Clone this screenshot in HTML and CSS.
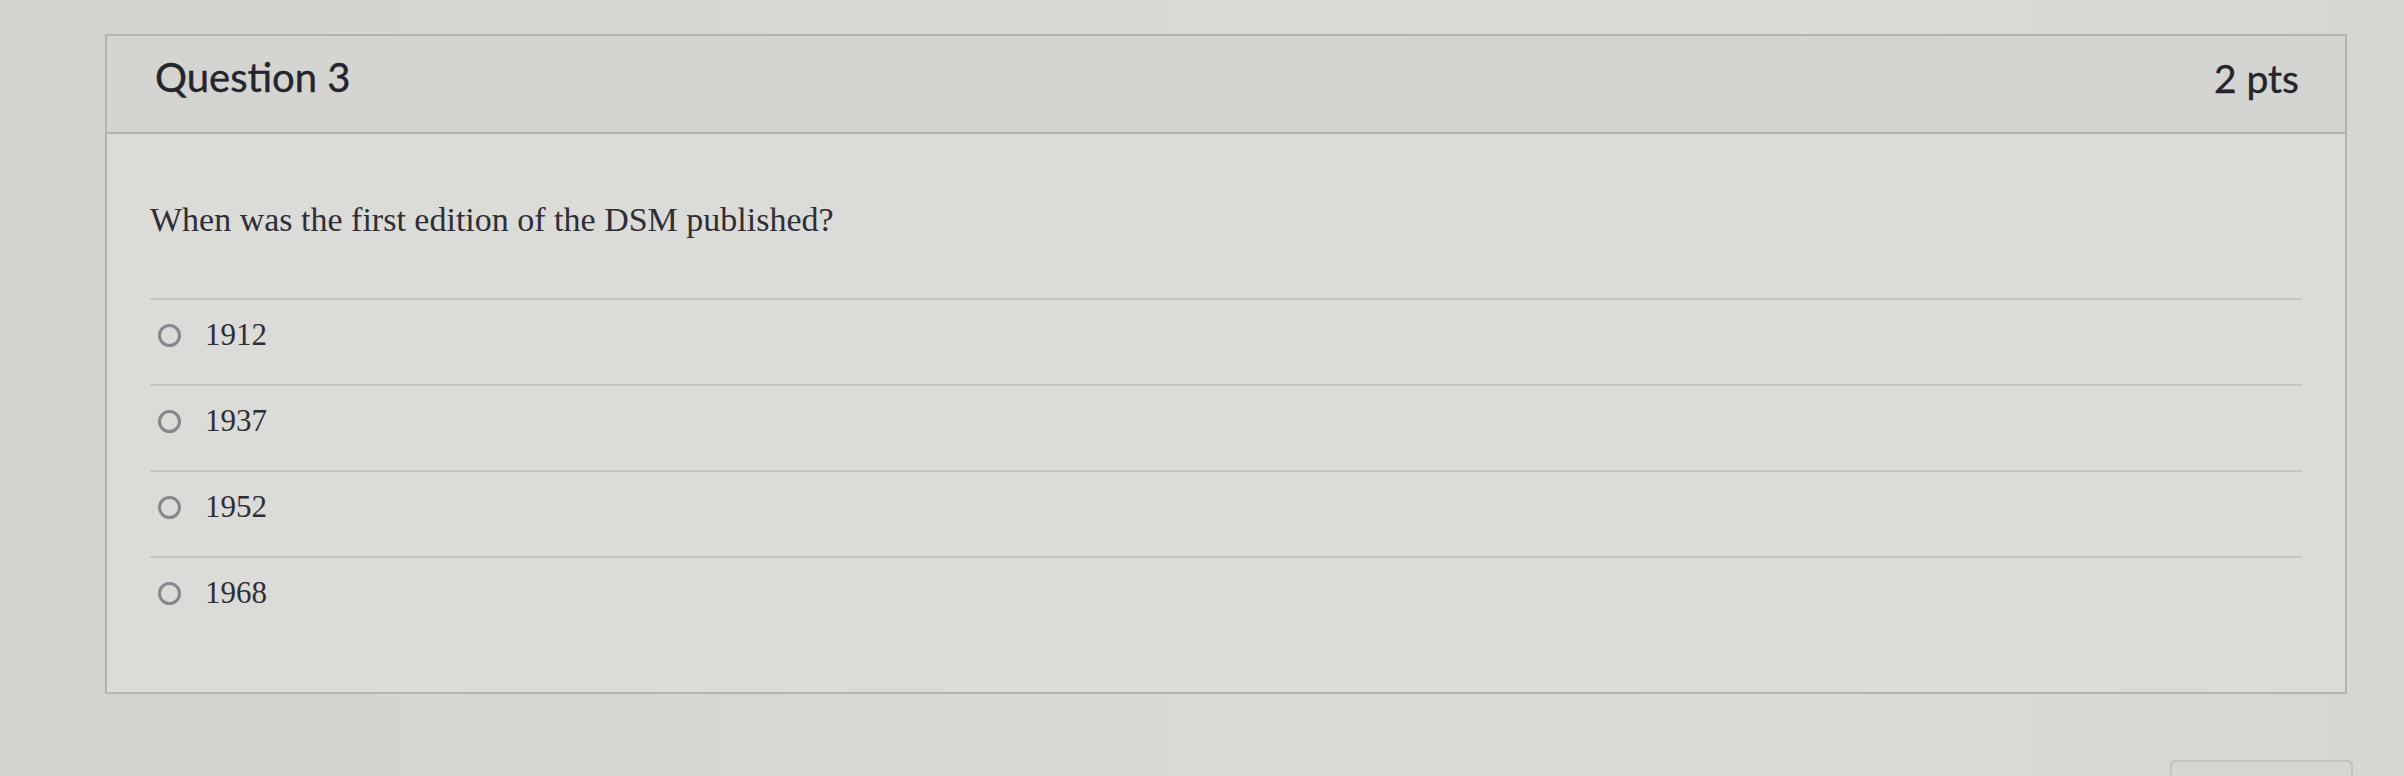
FILE: index.html
```html
<!DOCTYPE html>
<html lang="en">
<head>
  <meta charset="UTF-8">
  <meta name="viewport" content="width=device-width, initial-scale=1.0">
  <title>Quiz</title>
  <link rel="stylesheet" href="styles.css">
</head>
<body>

  <div class="quiz">
    <div class="question">
      <div class="question-header">
        <h2 class="question-title">Question 3</h2>
        <span class="question-points">2 pts</span>
      </div>

      <div class="question-body">
        <p class="question-text">When was the first edition of the DSM published?</p>

        <div class="answers">
          <label class="answer"><span class="radio"></span><span class="answer-text">1912</span></label>
          <label class="answer"><span class="radio"></span><span class="answer-text">1937</span></label>
          <label class="answer"><span class="radio"></span><span class="answer-text">1952</span></label>
          <label class="answer"><span class="radio"></span><span class="answer-text">1968</span></label>
        </div>
      </div>
    </div>

    <div class="quiz-actions">
      <button class="btn-next" type="button"></button>
    </div>
  </div>

</body>
</html>
```

FILE: styles.css
```css
/* General Styles */
body {
  margin: 0;
  padding: 0;
  background: linear-gradient(90deg, #d2d2cf 0%, #d8d8d5 40%, #dadad7 75%, #d6d6d3 100%);
  font-family: "Liberation Serif", serif;
  color: #2e2e37;
  overflow: hidden;
}

.quiz {
  padding: 34px 57px 0 105px;
}

/* Question card */
.question {
  border: 2px solid #b4b4b1;
  background-color: #dbdbd8;
}

.question-header {
  display: flex;
  justify-content: space-between;
  align-items: center;
  height: 82px;
  padding: 0 46px 14px 48px;
  background-color: #d4d4d1;
  border-bottom: 2px solid #b2b2af;
}

.question-title {
  margin: 0;
  font-family: Lato, sans-serif;
  font-size: 40px;
  font-weight: 400;
  color: #25252e;
  -webkit-text-stroke: 0.4px #25252e;
}

.question-points {
  font-family: Lato, sans-serif;
  font-size: 39px;
  color: #25252e;
  -webkit-text-stroke: 0.4px #25252e;
  padding-top: 2px;
}

.question-body {
  padding: 66px 43px 50px 43px;
}

.question-text {
  margin: 0 0 58px 0;
  font-size: 34px;
  line-height: 40px;
}

/* Answers */
.answers {
  display: flex;
  flex-direction: column;
}

.answer {
  display: flex;
  align-items: center;
  gap: 24px;
  height: 40px;
  padding: 15px 0 29px 8px;
  border-top: 2px solid #c6c6c3;
  font-size: 31px;
}

.radio {
  width: 17px;
  height: 17px;
  border: 3px solid #86868c;
  border-radius: 50%;
}

.answer-text {
  line-height: 40px;
}

/* Bottom actions */
.quiz-actions {
  display: flex;
  justify-content: flex-end;
  margin-top: 66px;
  margin-right: -6px;
}

.btn-next {
  width: 183px;
  height: 40px;
  background-color: #d6d6d3;
  border: 2px solid #c3c3c0;
  border-radius: 5px;
}
```
